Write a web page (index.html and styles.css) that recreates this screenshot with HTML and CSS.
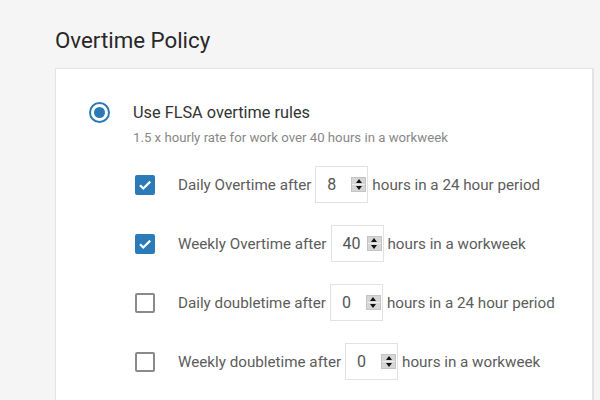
FILE: index.html
```html
<!DOCTYPE html>
<html lang="en">
<head>
    <meta charset="UTF-8">
    <meta name="viewport" content="width=device-width, initial-scale=1.0">
    <title>Overtime Policy</title>
    <link rel="stylesheet" href="styles.css">
</head>
<body>
    <div class="page">
        <h1>Overtime Policy</h1>
        <div class="card">
            <div class="option">
                <span class="radio checked"></span>
                <div class="option-text">
                    <div class="option-title">Use FLSA overtime rules</div>
                    <div class="option-note">1.5 x hourly rate for work over 40 hours in a workweek</div>
                </div>
            </div>

            <div class="rules">
                <div class="rule">
                    <span class="checkbox checked">
                        <svg viewBox="0 0 20 20" width="20" height="20"><path d="M5 10.2l3.3 3.3L15.2 6.6" fill="none" stroke="#fff" stroke-width="2.2"/></svg>
                    </span>
                    <span class="rule-label">Daily Overtime after</span>
                    <span class="num">
                        <span class="num-value">8</span>
                        <span class="spin"><i class="up"></i><i class="down"></i></span>
                    </span>
                    <span class="rule-label">hours in a 24 hour period</span>
                </div>

                <div class="rule">
                    <span class="checkbox checked">
                        <svg viewBox="0 0 20 20" width="20" height="20"><path d="M5 10.2l3.3 3.3L15.2 6.6" fill="none" stroke="#fff" stroke-width="2.2"/></svg>
                    </span>
                    <span class="rule-label">Weekly Overtime after</span>
                    <span class="num">
                        <span class="num-value">40</span>
                        <span class="spin"><i class="up"></i><i class="down"></i></span>
                    </span>
                    <span class="rule-label">hours in a workweek</span>
                </div>

                <div class="rule">
                    <span class="checkbox"></span>
                    <span class="rule-label">Daily doubletime after</span>
                    <span class="num">
                        <span class="num-value">0</span>
                        <span class="spin"><i class="up"></i><i class="down"></i></span>
                    </span>
                    <span class="rule-label">hours in a 24 hour period</span>
                </div>

                <div class="rule">
                    <span class="checkbox"></span>
                    <span class="rule-label">Weekly doubletime after</span>
                    <span class="num">
                        <span class="num-value">0</span>
                        <span class="spin"><i class="up"></i><i class="down"></i></span>
                    </span>
                    <span class="rule-label">hours in a workweek</span>
                </div>
            </div>
        </div>
    </div>
</body>
</html>
```

FILE: styles.css
```css
body {
    margin: 0;
    background-color: #f5f5f5;
    font-family: Roboto, "Liberation Sans", sans-serif;
    color: #5c5c5c;
    height: 400px;
    overflow: hidden;
}
.page {
    padding: 27px 6px 0 55px;
}
h1 {
    margin: 0 0 15px;
    font-size: 22.3px;
    font-weight: 400;
    line-height: 26px;
    color: #282828;
}
.card {
    background: #fff;
    border: 1px solid #e4e4e4;
    border-right-width: 2px;
    padding: 33px 0 40px 33px;
    min-height: 400px;
}
.option {
    display: flex;
    align-items: flex-start;
    gap: 23px;
}
.radio {
    flex: none;
    width: 21px;
    height: 21px;
    box-sizing: border-box;
    border: 2.5px solid #2a7ab8;
    border-radius: 50%;
    display: flex;
    align-items: center;
    justify-content: center;
}
.radio.checked::after {
    content: "";
    width: 11px;
    height: 11px;
    border-radius: 50%;
    background: #2a7ab8;
}
.option-title {
    font-size: 16.3px;
    line-height: 21px;
    color: #333;
}
.option-note {
    margin-top: 7px;
    font-size: 13.2px;
    color: #888;
}
.rules {
    padding: 21px 0 0 46px;
    display: flex;
    flex-direction: column;
    gap: 22px;
}
.rule {
    display: flex;
    align-items: center;
    gap: 4px;
    font-size: 15.2px;
}
.checkbox {
    flex: none;
    width: 20px;
    height: 20px;
    box-sizing: border-box;
    border: 2px solid #8a8a8a;
    border-radius: 2px;
    margin-right: 19px;
    display: flex;
}
.checkbox.checked {
    background: #2b7bb9;
    border-color: #2b7bb9;
}
.checkbox svg {
    margin: -2px;
}
.num {
    width: 53px;
    height: 37px;
    box-sizing: border-box;
    border: 1px solid #e2e2e2;
    display: flex;
    align-items: center;
    padding: 0 1px 0 11px;
    font-size: 16px;
}
.num-value {
    flex: 1;
    color: #555;
}
.spin {
    width: 15px;
    height: 15px;
    border: 1px solid #c4c4c4;
    box-sizing: border-box;
    display: flex;
    flex-direction: column;
    gap: 1px;
    background: #eee;
}
.spin i {
    flex: 1;
    background: #d6d6d6;
    display: flex;
    align-items: center;
    justify-content: center;
}
.spin i::after {
    content: "";
    width: 0;
    height: 0;
    border-left: 3.5px solid transparent;
    border-right: 3.5px solid transparent;
}
.spin .up::after {
    border-bottom: 4px solid #111;
}
.spin .down::after {
    border-top: 4px solid #111;
}
```
